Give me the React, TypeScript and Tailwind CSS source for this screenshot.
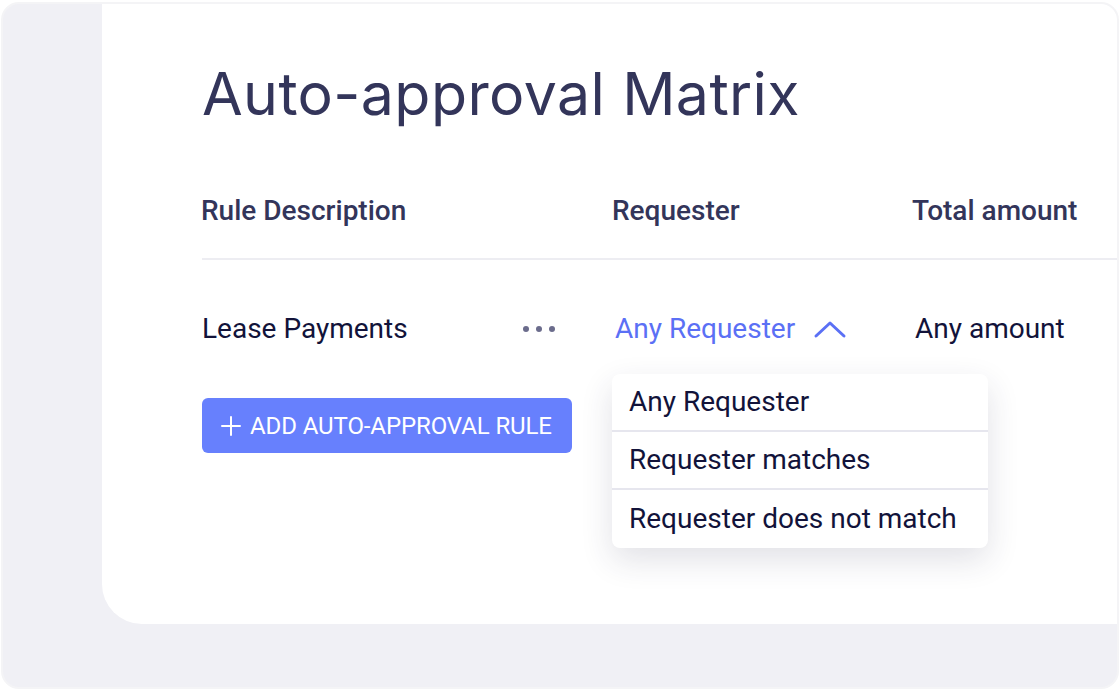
const options = ["Any Requester", "Requester matches", "Requester does not match"];

export default function App() {
  return (
    <div className="w-[1120px] h-[691px] bg-white pt-[2px] px-[1px] font-['Roboto',sans-serif]">
      <div className="flex h-[687px] rounded-[18px] border-2 border-[#f4f4f6] bg-[#f0f0f5] overflow-hidden">
        {/* side strip */}
        <div className="w-[99px] shrink-0" />

        {/* main panel */}
        <div className="flex-1 h-[620px] bg-white rounded-bl-[40px] pl-[100px] pt-[50px]">
          <h1 className="font-['Inter',sans-serif] text-[59px] leading-[80px] font-normal text-[#33355a] tracking-[0.4px]">
            Auto-approval Matrix
          </h1>

          {/* header row */}
          <div className="mt-[53px] flex items-center h-[48px] text-[28px] font-medium text-[#33355a]">
            <div className="w-[411px] -ml-px">Rule Description</div>
            <div className="w-[300px]">Requester</div>
            <div>Total amount</div>
          </div>
          <div className="mt-[23px] h-[2px] bg-[#ededf2]" />

          {/* rule row */}
          <div className="mt-[45px] flex items-center h-[48px] text-[28px] text-[#12133a]">
            <div className="w-[411px] flex items-center justify-between pr-[58px]">
              <span>Lease Payments</span>
              <span className="flex gap-[7px]">
                <span className="w-[6px] h-[6px] rounded-full bg-[#6b6c8c]" />
                <span className="w-[6px] h-[6px] rounded-full bg-[#6b6c8c]" />
                <span className="w-[6px] h-[6px] rounded-full bg-[#6b6c8c]" />
              </span>
            </div>
            <div className="w-[300px] relative">
              <div className="flex items-center gap-[18px] pl-[2px] text-[#5b70f5]">
                <span>Any Requester</span>
                <svg width="34" height="20" viewBox="0 0 34 20" fill="none">
                  <path d="M3 17 L17 4 L31 17" stroke="#5b70f5" strokeWidth="3" strokeLinecap="round" strokeLinejoin="round" />
                </svg>
              </div>

              {/* dropdown */}
              <div className="absolute left-[-1px] top-[66px] w-[376px] bg-white rounded-[8px] shadow-[0_12px_32px_rgba(40,40,80,0.14)] z-10">
                {options.map((o, i) => (
                  <div
                    key={o}
                    className={
                      i < options.length - 1
                        ? "h-[58px] flex items-center pl-[17px] border-b-2 border-[#e6e6ee]"
                        : "h-[58px] flex items-center pl-[17px]"
                    }
                  >
                    {o}
                  </div>
                ))}
              </div>
            </div>
            <div className="pl-[2px]">Any amount</div>
          </div>

          <button className="mt-[45px] h-[55px] w-[370px] rounded-[6px] bg-[#6780fd] flex items-center pl-[19px] gap-[9px] text-white text-[24px] font-normal tracking-[-0.1px]">
            <svg width="20" height="20" viewBox="0 0 20 20" fill="none">
              <path d="M10 1 V19 M1 10 H19" stroke="#fff" strokeWidth="2" strokeLinecap="round" />
            </svg>
            ADD AUTO-APPROVAL RULE
          </button>
        </div>
      </div>
    </div>
  );
}
